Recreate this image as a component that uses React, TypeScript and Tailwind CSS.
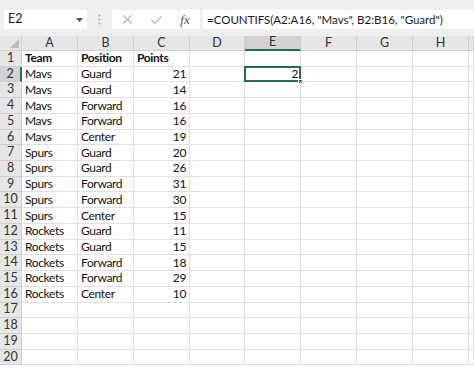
import React from "react";

const data: [string, string, string][] = [
  ["Mavs", "Guard", "21"],
  ["Mavs", "Guard", "14"],
  ["Mavs", "Forward", "16"],
  ["Mavs", "Forward", "16"],
  ["Mavs", "Center", "19"],
  ["Spurs", "Guard", "20"],
  ["Spurs", "Guard", "26"],
  ["Spurs", "Forward", "31"],
  ["Spurs", "Forward", "30"],
  ["Spurs", "Center", "15"],
  ["Rockets", "Guard", "11"],
  ["Rockets", "Guard", "15"],
  ["Rockets", "Forward", "18"],
  ["Rockets", "Forward", "29"],
  ["Rockets", "Center", "10"],
];

const cols = ["A", "B", "C", "D", "E", "F", "G", "H", ""];

export default function App() {
  const rows: string[][] = [];
  rows.push(["Team", "Position", "Points"]);
  data.forEach((d) => rows.push([d[0], d[1], d[2]]));
  while (rows.length < 20) rows.push([]);

  return (
    <div
      className="w-[474px] h-[370px] overflow-hidden bg-white text-[#111]"
      style={{ fontFamily: "Lato, 'Open Sans', sans-serif" }}
    >
      {/* Toolbar */}
      <div className="h-[36px] bg-[#efefef] flex items-start pt-[10px]">
        <div className="ml-[4px] w-[83px] h-[19px] bg-white flex items-center justify-between pl-[4px] pr-[4px]">
          <span className="text-[12.5px] text-[#222]">E2</span>
          <svg width="7" height="4" viewBox="0 0 7 4">
            <path d="M0 0 L7 0 L3.5 4 Z" fill="#555" />
          </svg>
        </div>
        <div className="w-[25px] h-[19px] flex items-center justify-center">
          <svg width="3" height="11" viewBox="0 0 3 11">
            <circle cx="1.5" cy="1.5" r="1" fill="#aaa" />
            <circle cx="1.5" cy="5.5" r="1" fill="#aaa" />
            <circle cx="1.5" cy="9.5" r="1" fill="#aaa" />
          </svg>
        </div>
        <div className="w-[88px] h-[19px] bg-white flex items-center">
          <div className="w-[30px] flex justify-center">
            <svg width="9" height="9" viewBox="0 0 9 9">
              <path d="M0.5 0.5 L8.5 8.5 M8.5 0.5 L0.5 8.5" stroke="#b0b0b0" strokeWidth="1.1" />
            </svg>
          </div>
          <div className="w-[28px] flex justify-center">
            <svg width="11" height="8" viewBox="0 0 11 8">
              <path d="M0.5 4 L4 7.3 L10.5 0.5" stroke="#b0b0b0" strokeWidth="1.1" fill="none" />
            </svg>
          </div>
          <div className="w-[30px] flex justify-center">
            <span
              className="text-[13px] italic text-[#555] leading-none"
              style={{ fontFamily: "'Liberation Serif', serif" }}
            >
              fx
            </span>
          </div>
        </div>
        <div className="ml-[3px] flex-1 h-[19px] bg-white flex items-center pl-[4px]">
          <span className="text-[11.5px] text-[#1a1a1a] whitespace-nowrap">
            =COUNTIFS(A2:A16, "Mavs", B2:B16, "Guard")
          </span>
        </div>
      </div>

      {/* Grid */}
      <div className="grid grid-cols-[22px_56px_56px_56px_55px_56px_56px_56px_56px_1fr] grid-rows-[15px_repeat(20,15.72px)]">
        {/* corner */}
        <div className="bg-[#e6e6e6] border-r border-b border-[#cfcfcf] relative">
          <svg className="absolute right-[2px] bottom-[2px]" width="9" height="9" viewBox="0 0 9 9">
            <path d="M9 0 L9 9 L0 9 Z" fill="#bdbdbd" />
          </svg>
        </div>
        {cols.map((c, i) => (
          <div
            key={"h" + i}
            className={
              c === "E"
                ? "bg-[#d2d2d2] border-r border-[#cfcfcf] border-b-2 border-b-[#217346] flex items-center justify-center text-[12.5px] text-[#333]"
                : "bg-[#e6e6e6] border-r border-b border-[#cfcfcf] flex items-center justify-center text-[12.5px] text-[#333]"
            }
          >
            {c}
          </div>
        ))}
        {rows.map((r, ri) => {
          const rowNum = ri + 1;
          const sel = rowNum === 2;
          return (
            <React.Fragment key={"r" + ri}>
              <div
                className={
                  sel
                    ? "bg-[#d2d2d2] border-b border-[#cfcfcf] border-r-2 border-r-[#217346] flex items-center justify-center text-[12.5px] text-[#333]"
                    : "bg-[#e6e6e6] border-r border-b border-[#cfcfcf] flex items-center justify-center text-[12.5px] text-[#333]"
                }
              >
                {rowNum}
              </div>
              {cols.map((c, ci) => {
                const val = r[ci] ?? "";
                const isNum = ci === 2 && rowNum > 1;
                const bold = rowNum === 1;
                const isSel = c === "E" && sel;
                return (
                  <div
                    key={"c" + ri + "_" + ci}
                    className={
                      "relative border-r border-b border-[#e1e1e1] flex items-center text-[12px] tracking-[-0.35px] whitespace-nowrap " +
                      (isNum ? "justify-end pr-[3px] " : "pl-[3px] ") +
                      (bold ? "font-bold" : "")
                    }
                  >
                    {isSel ? (
                      <>
                        <div className="absolute left-[-1px] top-[-1px] right-[-1px] bottom-[-1px] border-2 border-[#217346]" />
                        <span className="ml-auto pr-[2px]">2</span>
                        <div className="absolute right-[-3px] bottom-[-3px] w-[5px] h-[5px] bg-[#217346] border border-white" />
                      </>
                    ) : (
                      val
                    )}
                  </div>
                );
              })}
            </React.Fragment>
          );
        })}
      </div>
    </div>
  );
}
